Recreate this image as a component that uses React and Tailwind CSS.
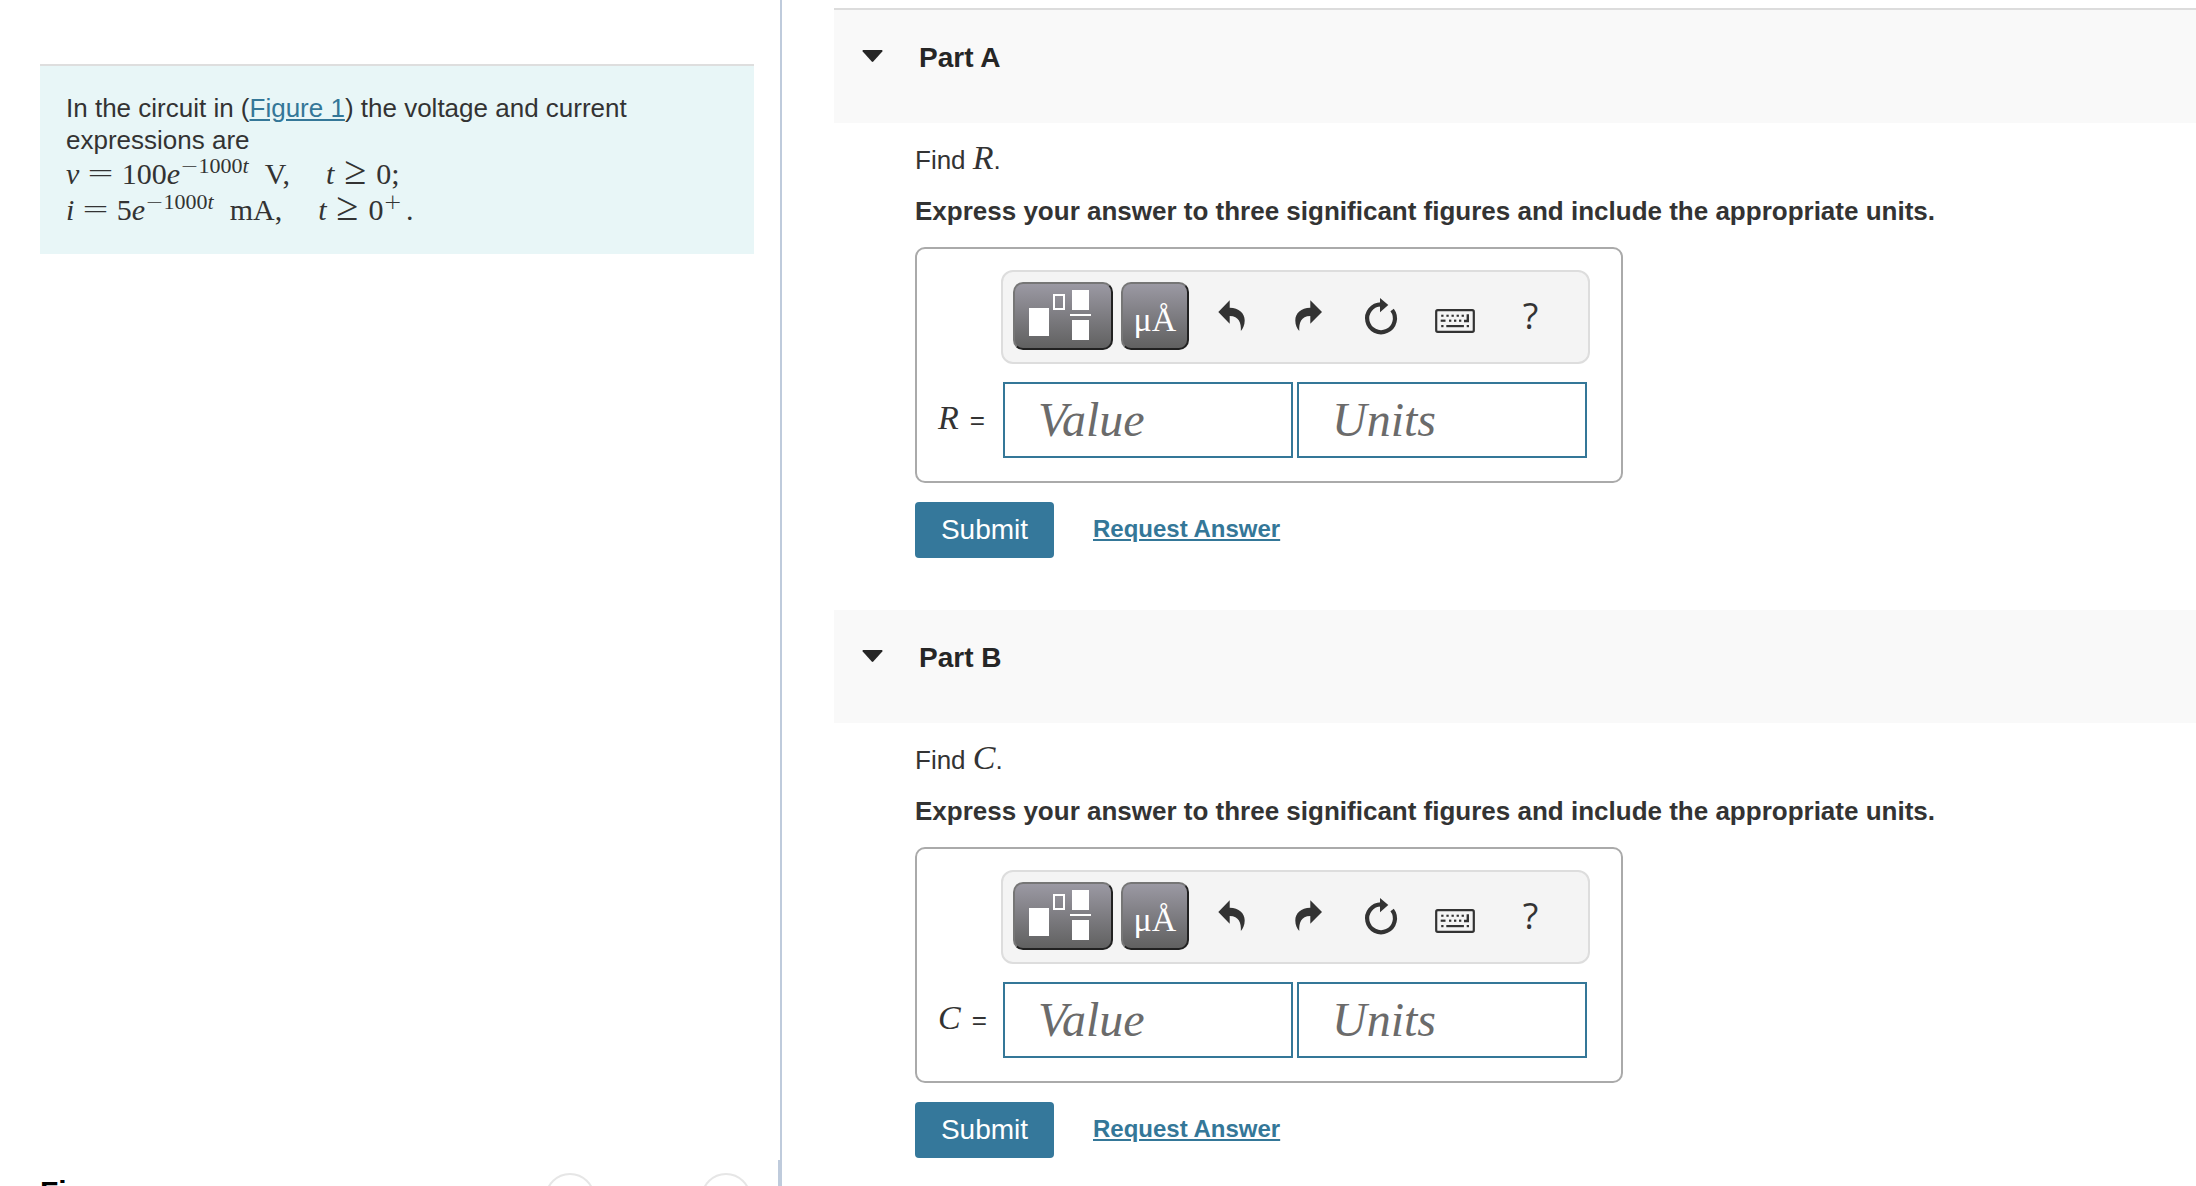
import { useState } from 'react';

const PARTS = [
  { id: 'a', title: 'Part A', symbol: 'R' },
  { id: 'b', title: 'Part B', symbol: 'C' },
];

// Inline math: serif digits, italic variables and thin, wide operators
function Var({ children }) {
  return <i className="font-['Liberation_Serif',serif] text-[34px] leading-5">{children}</i>;
}

function Equals() {
  return <span className="font-['DejaVu_Sans',sans-serif] font-extralight text-[34px] leading-5 mx-[7px]">=</span>;
}

function AtLeast() {
  return <span className="text-[40px] leading-5 mx-[10px]">≥</span>;
}

function Sup({ sign, children }) {
  return (
    <span className="align-[11px] text-[22px] leading-[0px]">
      <span className="font-['DejaVu_Sans',sans-serif] font-extralight">{sign}</span>
      {children}
    </span>
  );
}

function ProblemStatement() {
  return (
    <div className="ml-10 mr-[26px] border-t-2 border-[#dedede] bg-[#e8f6f7] p-[26px] text-[26px] leading-8">
      <p>
        In the circuit in (<a href="#figure" className="text-[#347798] underline">Figure 1</a>) the voltage and current expressions are
      </p>
      <div className="font-['Liberation_Serif',serif] text-[30px] leading-9">
        <p>
          <i>v</i><Equals />100<i>e</i><Sup sign="−">1000<i>t</i></Sup>
          <span className="ml-4">V,</span>
          <i className="ml-9">t</i><AtLeast />0;
        </p>
        <p>
          <i>i</i><Equals />5<i>e</i><Sup sign="−">1000<i>t</i></Sup>
          <span className="ml-4">mA,</span>
          <i className="ml-9">t</i><AtLeast />0<Sup sign="+" />
          <span className="ml-1">.</span>
        </p>
      </div>
    </div>
  );
}

function TemplatesIcon() {
  return (
    <svg viewBox="0 0 96 64" className="w-24 h-16" fill="#fff" aria-hidden="true">
      <rect x="14" y="24" width="20" height="28" />
      <rect x="39" y="11" width="10" height="14" fill="none" stroke="#fff" strokeWidth="2" />
      <rect x="57" y="6" width="17" height="20" />
      <rect x="55" y="30" width="21" height="2" />
      <rect x="57" y="36" width="17" height="20" />
    </svg>
  );
}

function UndoIcon() {
  return (
    <svg viewBox="0 0 75 68" className="w-full h-full" fill="#333" aria-hidden="true">
      <path d="M25.3 30 36.7 18.3V25.7C46 26 51.7 31 51.7 38.5 51.7 43 50 46.5 47.9 49 48.3 41 46 34 36.7 34V41.7Z" />
    </svg>
  );
}

function RedoIcon() {
  return (
    <svg viewBox="0 0 75 68" className="w-full h-full" fill="#333" aria-hidden="true">
      <path d="M54 30 42.3 18.3V25.7C33 26 27.3 31 27.3 38.5 27.3 43 29 46.5 31.3 49 30.9 41 33 34 42.3 34V41.7Z" />
    </svg>
  );
}

function ResetIcon() {
  return (
    <svg viewBox="0 0 75 68" className="w-full h-full" aria-hidden="true">
      <path d="M49.1 27.9A13.9 13.9 0 1 1 38 22.4" fill="none" stroke="#333" strokeWidth="4.2" />
      <path d="M37 16 45.3 23 37 30.2Z" fill="#333" />
    </svg>
  );
}

function KeyboardIcon() {
  return (
    <svg viewBox="0 0 75 68" className="w-full h-full" fill="#333" aria-hidden="true">
      <rect x="18.2" y="28.2" width="37.6" height="21.6" rx="1.5" fill="none" stroke="#333" strokeWidth="2.2" />
      {[23.2, 28.4, 33.5, 38.6, 43.6].map((x) => (
        <rect key={x} x={x} y="32.7" width="2.3" height="2.1" />
      ))}
      <rect x="22.7" y="37.6" width="4.8" height="2.2" />
      {[31, 36, 41].map((x) => (
        <rect key={x} x={x} y="37.6" width="2.3" height="2.2" />
      ))}
      <path d="M48.6 32.3H51V40.2H46V37.8H48.6Z" />
      <rect x="23.2" y="43" width="2.3" height="2.2" />
      <rect x="28.3" y="43" width="17.6" height="2.2" />
      <rect x="48.7" y="43" width="2.3" height="2.2" />
    </svg>
  );
}

const ACTIONS = [
  { label: 'Undo', icon: <UndoIcon /> },
  { label: 'Redo', icon: <RedoIcon /> },
  { label: 'Reset', icon: <ResetIcon /> },
  { label: 'Keyboard shortcuts', icon: <KeyboardIcon /> },
  { label: 'Help', icon: <span className="font-['Open_Sans',sans-serif] font-medium text-[36px] leading-none">?</span> },
];

const paletteButton =
  'flex items-center justify-center h-[68px] rounded-[10px] border-2 border-t-[#767676] border-l-[#767676] border-r-[#212121] border-b-[#212121] bg-linear-to-b from-[#9b99a3] to-[#616161] text-white';

function Toolbar() {
  return (
    <div className="ml-[84px] mr-[31px] flex items-center rounded-xl border-2 border-[#ddd] bg-[#f4f4f4] px-[10px] pt-[10px] pb-3">
      <button type="button" aria-label="Templates" className={`${paletteButton} w-[100px] mr-2`}>
        <TemplatesIcon />
      </button>
      <button type="button" aria-label="Units symbols" className={`${paletteButton} w-[68px] mr-1 pt-2`}>
        <span className="font-['Liberation_Serif',serif] text-[34px] leading-none">μÅ</span>
      </button>
      {ACTIONS.map(({ label, icon }) => (
        <button key={label} type="button" aria-label={label} className="flex h-[68px] w-[75px] items-center justify-center">
          {icon}
        </button>
      ))}
    </div>
  );
}

const answerInput =
  "h-[76px] w-full min-w-0 flex-1 border-2 border-[#347798] bg-white pb-0.5 pl-[33px] font-['Liberation_Serif',serif] italic text-[48px] placeholder:text-[#6b6b6b] outline-none";

function AnswerBox({ id, symbol }) {
  return (
    <div className="mt-5 w-[708px] max-w-full rounded-[10px] border-2 border-[#aaa] bg-white pt-[21px] pb-[23px]">
      <Toolbar />
      <div className="mt-[18px] flex items-center pr-[34px]">
        <label htmlFor={`value-${id}`} className="w-[86px] shrink-0 pl-[21px]">
          <Var>{symbol}</Var>
          <span className="ml-[11px]">=</span>
        </label>
        <div className="flex min-w-0 flex-1 gap-1">
          <input id={`value-${id}`} type="text" placeholder="Value" className={answerInput} />
          <input type="text" aria-label="Units" placeholder="Units" className={answerInput} />
        </div>
      </div>
    </div>
  );
}

function Part({ id, title, symbol }) {
  const [open, setOpen] = useState(true);

  return (
    <section>
      <h2 className="bg-[#f9f9f9]">
        <button
          type="button"
          aria-expanded={open}
          onClick={() => setOpen(!open)}
          className="flex w-full items-center gap-9 pt-8 pb-[49px] pl-7 text-[28px] leading-8 font-bold text-[#262626]"
        >
          <svg viewBox="0 0 21 16" className="h-4 w-[21px]" aria-hidden="true">
            <path d="M1 0H20Q21 .6 20.3 1.6L11.3 11.6Q10.5 12.2 9.7 11.6L.7 1.6Q0 .6 1 0Z" fill="#262626" />
          </svg>
          {title}
        </button>
      </h2>
      {open && (
        <div className="pt-[21px] pb-[52px] pl-[81px]">
          <p>Find <Var>{symbol}</Var>.</p>
          <p className="mt-[19px] font-bold">
            Express your answer to three significant figures and include the appropriate units.
          </p>
          <AnswerBox id={id} symbol={symbol} />
          <div className="mt-[19px] flex items-center gap-[39px]">
            <button type="button" className="h-14 w-[139px] rounded bg-[#35789b] text-[28px] text-white">
              Submit
            </button>
            <a href="#request-answer" className="pb-0.5 text-[24px] font-bold text-[#347798] underline">
              Request Answer
            </a>
          </div>
        </div>
      )}
    </section>
  );
}

export default function App() {
  return (
    <div className="flex h-screen overflow-hidden bg-white font-['Liberation_Sans',Arial,sans-serif] text-[26px] leading-8 text-[#333]">
      <aside className="flex w-[782px] shrink-0 flex-col">
        <div className="flex-1 border-r-2 border-[#bfcbdc] pt-16">
          <ProblemStatement />
        </div>
        {/* Figure pane, only its top edge is in view */}
        <div id="figure" className="flex h-[26px] justify-between overflow-hidden border-r-4 border-[#bfcbdc] pt-[13px] pl-10 pr-[27px]">
          <h2 className="pt-px text-[30px] leading-9 font-bold text-black">Figure</h2>
          <div className="flex gap-[106px]">
            <button type="button" aria-label="Previous figure" className="size-[50px] rounded-full border-2 border-[#e6e6e6]" />
            <button type="button" aria-label="Next figure" className="size-[50px] rounded-full border-2 border-[#e6e6e6]" />
          </div>
        </div>
      </aside>
      <main className="min-w-0 flex-1 overflow-hidden pt-2 pl-[52px]">
        <div className="border-t-2 border-[#dcdcdc]">
          {PARTS.map((part) => (
            <Part key={part.id} {...part} />
          ))}
        </div>
      </main>
    </div>
  );
}
